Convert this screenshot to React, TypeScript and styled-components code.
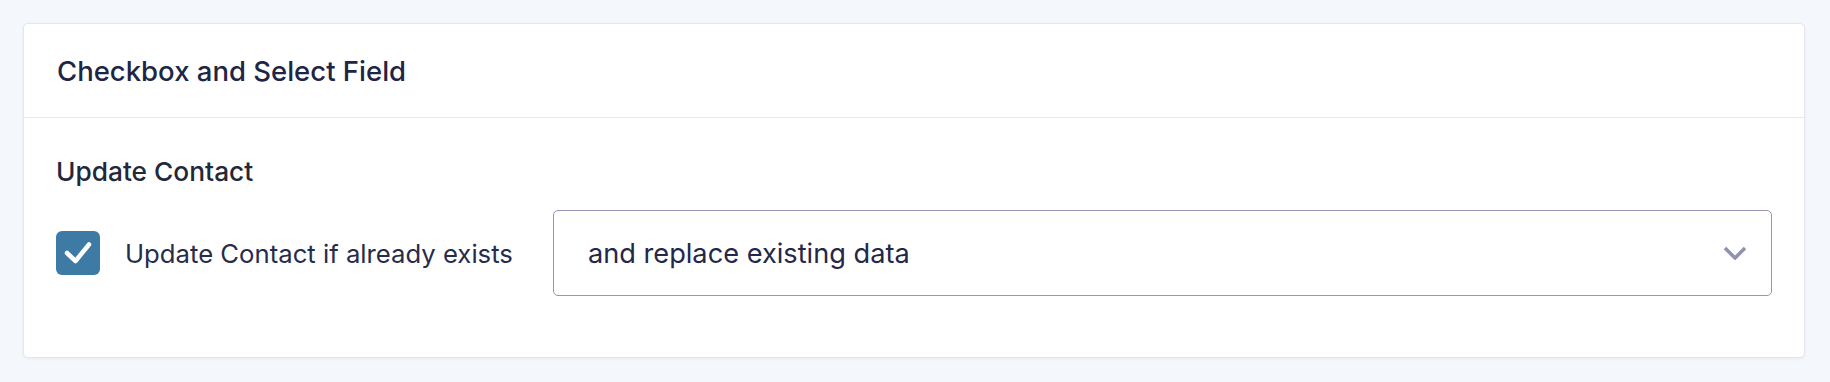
import styled, { createGlobalStyle } from "styled-components";

const GlobalStyle = createGlobalStyle`
    body {
        margin: 0;
        background-color: #f4f7fb;
        font-family: Inter, "Noto Sans", sans-serif;
    }
`;

const Page = styled.div`
    padding: 23px 25px 25px 23px;
`;

const Card = styled.div`
    background-color: #ffffff;
    border: 1px solid #e4e5ef;
    border-radius: 5px;
    box-shadow: 0 1px 3px rgba(40, 45, 90, 0.06);
`;

const CardHeader = styled.div`
    height: 93px;
    display: flex;
    align-items: center;
    padding: 0 33px;
    border-bottom: 1px solid #e6e7f0;
`;

const CardTitle = styled.h2`
    margin: 0;
    font-size: 27.5px;
    font-weight: 500;
    color: #1f2545;
`;

const CardBody = styled.div`
    padding: 38px 32px 61px 32px;
`;

const FieldLabel = styled.div`
    font-size: 26.3px;
    line-height: 32px;
    font-weight: 500;
    color: #22283a;
    margin-bottom: 22px;
`;

const Row = styled.div`
    display: flex;
    align-items: center;
`;

const CheckLabel = styled.label`
    display: flex;
    align-items: center;
    gap: 25px;
    font-size: 25.7px;
    color: #272c4a;
    margin-right: 40px;
    cursor: pointer;
`;

const Box = styled.span`
    width: 44px;
    height: 44px;
    border-radius: 6px;
    background-color: #3e7ba4;
    display: flex;
    align-items: center;
    justify-content: center;
    flex-shrink: 0;
`;

const Select = styled.div`
    flex: 1;
    height: 84px;
    border: 1.5px solid #9696b6;
    border-radius: 5px;
    display: flex;
    align-items: center;
    justify-content: space-between;
    padding: 0 24px 0 34px;
    font-size: 27.2px;
    color: #23284a;
`;

export default function App(): JSX.Element {
    return (
        <>
            <GlobalStyle />
            <Page>
                <Card>
                    <CardHeader>
                        <CardTitle>Checkbox and Select Field</CardTitle>
                    </CardHeader>
                    <CardBody>
                        <FieldLabel>Update Contact</FieldLabel>
                        <Row>
                            <CheckLabel>
                                <Box>
                                    <svg width="44" height="44" viewBox="0 0 44 44">
                                        <path
                                            d="M11 22l8.5 8L33 13.5"
                                            fill="none"
                                            stroke="#fff"
                                            strokeWidth="4.5"
                                            strokeLinecap="round"
                                            strokeLinejoin="round"
                                        />
                                    </svg>
                                </Box>
                                Update Contact if already exists
                            </CheckLabel>
                            <Select>
                                <span>and replace existing data</span>
                                <svg width="24" height="14" viewBox="0 0 24 14">
                                    <path
                                        d="M2 2l10 10L22 2"
                                        fill="none"
                                        stroke="#9090b0"
                                        strokeWidth="3.5"
                                    />
                                </svg>
                            </Select>
                        </Row>
                    </CardBody>
                </Card>
            </Page>
        </>
    );
}
